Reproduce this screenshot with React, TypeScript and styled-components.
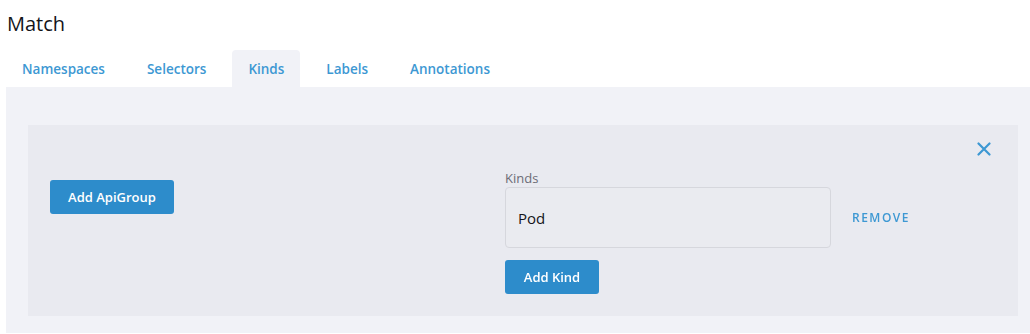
import React, { FC, useState } from 'react';
import styled, { createGlobalStyle } from 'styled-components';

const GlobalStyle = createGlobalStyle`
  html, body {
    margin: 0;
    padding: 0;
    background: #ffffff;
    font-family: 'Open Sans', 'Noto Sans', sans-serif;
    color: #141419;
  }
`;

const Page = styled.div`
  padding: 0 0 0 6px;
  overflow: hidden;
`;

const Title = styled.h2`
  margin: 0;
  padding: 10px 0 0 1px;
  height: 50px;
  box-sizing: border-box;
  font-size: 20px;
  line-height: 28px;
  font-weight: 400;
  color: #141419;
`;

const TabList = styled.ul`
  display: flex;
  margin: 0;
  padding: 0;
  list-style: none;
  gap: 10px;
`;

const Tab = styled.li<{ $active?: boolean }>`
  height: 37px;
  padding: 0 16px;
  display: flex;
  align-items: center;
  border-radius: 4px 4px 0 0;
  background: ${(p) => (p.$active ? '#f1f2f7' : 'transparent')};
  color: #3d98d3;
  font-size: 13.5px;
  font-weight: 600;
  cursor: pointer;
`;

const Panel = styled.div`
  background: #f1f2f7;
  padding: 38px 12px 17px 22px;
`;

const Box = styled.div`
  background: #e9eaf0;
  padding: 14px 22px 22px 22px;
`;

const BoxHeader = styled.div`
  display: flex;
  justify-content: flex-end;
  height: 20px;
  margin-bottom: 11px;
`;

const CloseButton = styled.button`
  width: 24px;
  height: 20px;
  padding: 0;
  border: 0;
  background: transparent;
  display: flex;
  align-items: center;
  justify-content: center;
  cursor: pointer;
`;

const BoxRow = styled.div`
  display: grid;
  grid-template-columns: 455px 1fr;
`;

const Button = styled.button<{ $width: number }>`
  width: ${(p) => p.$width}px;
  height: 34px;
  border: 0;
  border-radius: 3px;
  background: #2d8ccb;
  color: #ffffff;
  font-family: inherit;
  font-size: 13px;
  font-weight: 600;
  cursor: pointer;
`;

const LeftColumn = styled.div`
  padding-top: 10px;
`;

const Label = styled.label`
  display: block;
  font-size: 13px;
  line-height: 16px;
  color: #6c6c76;
  margin-bottom: 1px;
`;

const InputRow = styled.div`
  display: flex;
  align-items: center;
  gap: 21px;
`;

const Input = styled.input`
  width: 326px;
  height: 61px;
  box-sizing: border-box;
  padding: 0 12px;
  border: 1px solid #d6d7dd;
  border-radius: 4px;
  background: #eaebf0;
  font-family: inherit;
  font-size: 15px;
  color: #141419;
  outline: none;
  caret-color: #141419;
`;

const RemoveLink = styled.button`
  border: 0;
  padding: 0;
  background: transparent;
  color: #3d98d3;
  font-family: inherit;
  font-size: 12px;
  font-weight: 600;
  letter-spacing: 1.5px;
  text-transform: uppercase;
  cursor: pointer;
`;

const AddKindWrap = styled.div`
  margin-top: 12px;
`;

const tabs = ['Namespaces', 'Selectors', 'Kinds', 'Labels', 'Annotations'];

const App: FC = () => {
  const [kind, setKind] = useState('Pod');

  return (
    <Page>
      <GlobalStyle />
      <Title>Match</Title>
      <TabList>
        {tabs.map((t) => (
          <Tab key={t} $active={t === 'Kinds'}>
            {t}
          </Tab>
        ))}
      </TabList>
      <Panel>
        <Box>
          <BoxHeader>
            <CloseButton aria-label="Close">
              <svg width="14" height="14" viewBox="0 0 14 14">
                <path d="M1.5 1.5 L12.5 12.5 M12.5 1.5 L1.5 12.5" stroke="#3d98d3" strokeWidth="2.2" strokeLinecap="round" />
              </svg>
            </CloseButton>
          </BoxHeader>
          <BoxRow>
            <LeftColumn>
              <Button $width={124}>Add ApiGroup</Button>
            </LeftColumn>
            <div>
              <Label>Kinds</Label>
              <InputRow>
                <Input value={kind} onChange={(e) => setKind(e.target.value)} autoFocus />
                <RemoveLink>Remove</RemoveLink>
              </InputRow>
              <AddKindWrap>
                <Button $width={94}>Add Kind</Button>
              </AddKindWrap>
            </div>
          </BoxRow>
        </Box>
      </Panel>
    </Page>
  );
};

export default App;
